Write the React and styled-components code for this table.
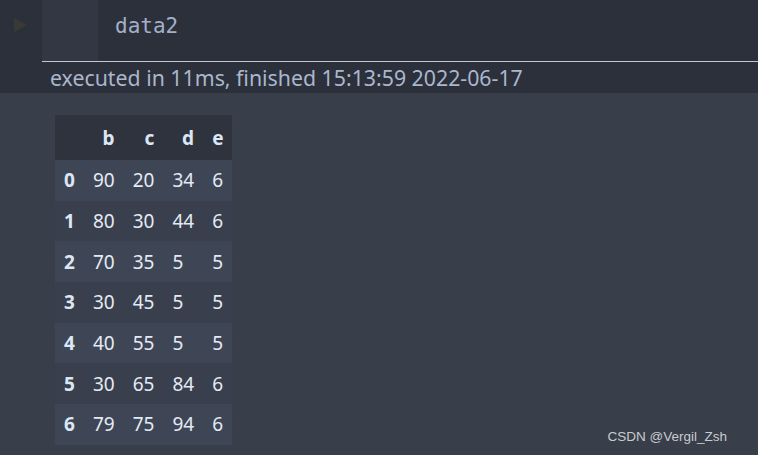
import React from "react";
import styled, { createGlobalStyle } from "styled-components";

const GlobalStyle = createGlobalStyle`
    html, body {
        margin: 0;
        padding: 0;
        background: #383e4a;
    }
    body {
        font-family: "Noto Sans", "Open Sans", sans-serif;
    }
`;

const Page = styled.div`
    position: relative;
    width: 758px;
    height: 455px;
    overflow: hidden;
    background: #383e4a;
`;

const CellTop = styled.div`
    display: flex;
    background: #2c303b;
`;

const Gutter = styled.div`
    width: 42px;
    flex-shrink: 0;
    display: flex;
    justify-content: center;
    padding-top: 18px;
    box-sizing: border-box;
`;

const PlayMark = styled.div`
    width: 0;
    height: 0;
    margin-left: -1px;
    border-top: 7px solid transparent;
    border-bottom: 7px solid transparent;
    border-left: 13px solid #393a33;
`;

const CellBody = styled.div`
    flex: 1;
    display: flex;
    flex-direction: column;
`;

const InputRow = styled.div`
    display: flex;
    height: 61px;
    border-bottom: 1px solid #c3c7cf;
`;

const Prompt = styled.div`
    width: 56px;
    background: #323743;
`;

const Code = styled.div`
    padding: 11px 0 0 17px;
    font-family: "DejaVu Sans Mono", "Liberation Mono", monospace;
    font-size: 21px;
    line-height: 30px;
    color: #a3b1c8;
`;

const ExecInfo = styled.div`
    height: 31px;
    margin-left: -34px;
    padding-left: 42px;
    font-size: 21.3px;
    line-height: 31px;
    color: #aab7cd;
    white-space: nowrap;
`;

const Output = styled.div`
    padding: 22px 0 0 55px;
`;

const Frame = styled.table`
    border-collapse: collapse;
    border-spacing: 0;
    font-size: 19px;
    color: #e4eaf4;
`;

const HeadRow = styled.tr`
    height: 45px;
    background: #2e333e;
`;

const Row = styled.tr`
    height: 40.7px;
    background: ${p => (p.$odd ? "#393f4c" : "#3e4656")};
`;

const Th = styled.th`
    padding: 0 9px;
    text-align: right;
    font-weight: 700;
    color: #dde6f4;
`;

const Td = styled.td`
    padding: 0 9px;
    text-align: left;
    font-weight: 400;
`;

const Watermark = styled.div`
    position: absolute;
    right: 31px;
    bottom: 11px;
    font-family: "Liberation Sans", Arial, sans-serif;
    font-size: 13.5px;
    color: #c9cbcf;
`;

const rows = [
    [90, 20, 34, 6],
    [80, 30, 44, 6],
    [70, 35, 5, 5],
    [30, 45, 5, 5],
    [40, 55, 5, 5],
    [30, 65, 84, 6],
    [79, 75, 94, 6],
];

export default function App() {
    return (
        <Page>
            <GlobalStyle />
            <CellTop>
                <Gutter>
                    <PlayMark />
                </Gutter>
                <CellBody>
                    <InputRow>
                        <Prompt />
                        <Code>data2</Code>
                    </InputRow>
                    <ExecInfo>executed in 11ms, finished 15:13:59 2022-06-17</ExecInfo>
                </CellBody>
            </CellTop>
            <Output>
                <Frame>
                    <thead>
                        <HeadRow>
                            <Th></Th>
                            <Th>b</Th>
                            <Th>c</Th>
                            <Th>d</Th>
                            <Th>e</Th>
                        </HeadRow>
                    </thead>
                    <tbody>
                        {rows.map((r, i) => (
                            <Row key={i} $odd={i % 2 === 1}>
                                <Th>{i}</Th>
                                {r.map((v, j) => (
                                    <Td key={j}>{v}</Td>
                                ))}
                            </Row>
                        ))}
                    </tbody>
                </Frame>
            </Output>
            <Watermark>CSDN @Vergil_Zsh</Watermark>
        </Page>
    );
}
